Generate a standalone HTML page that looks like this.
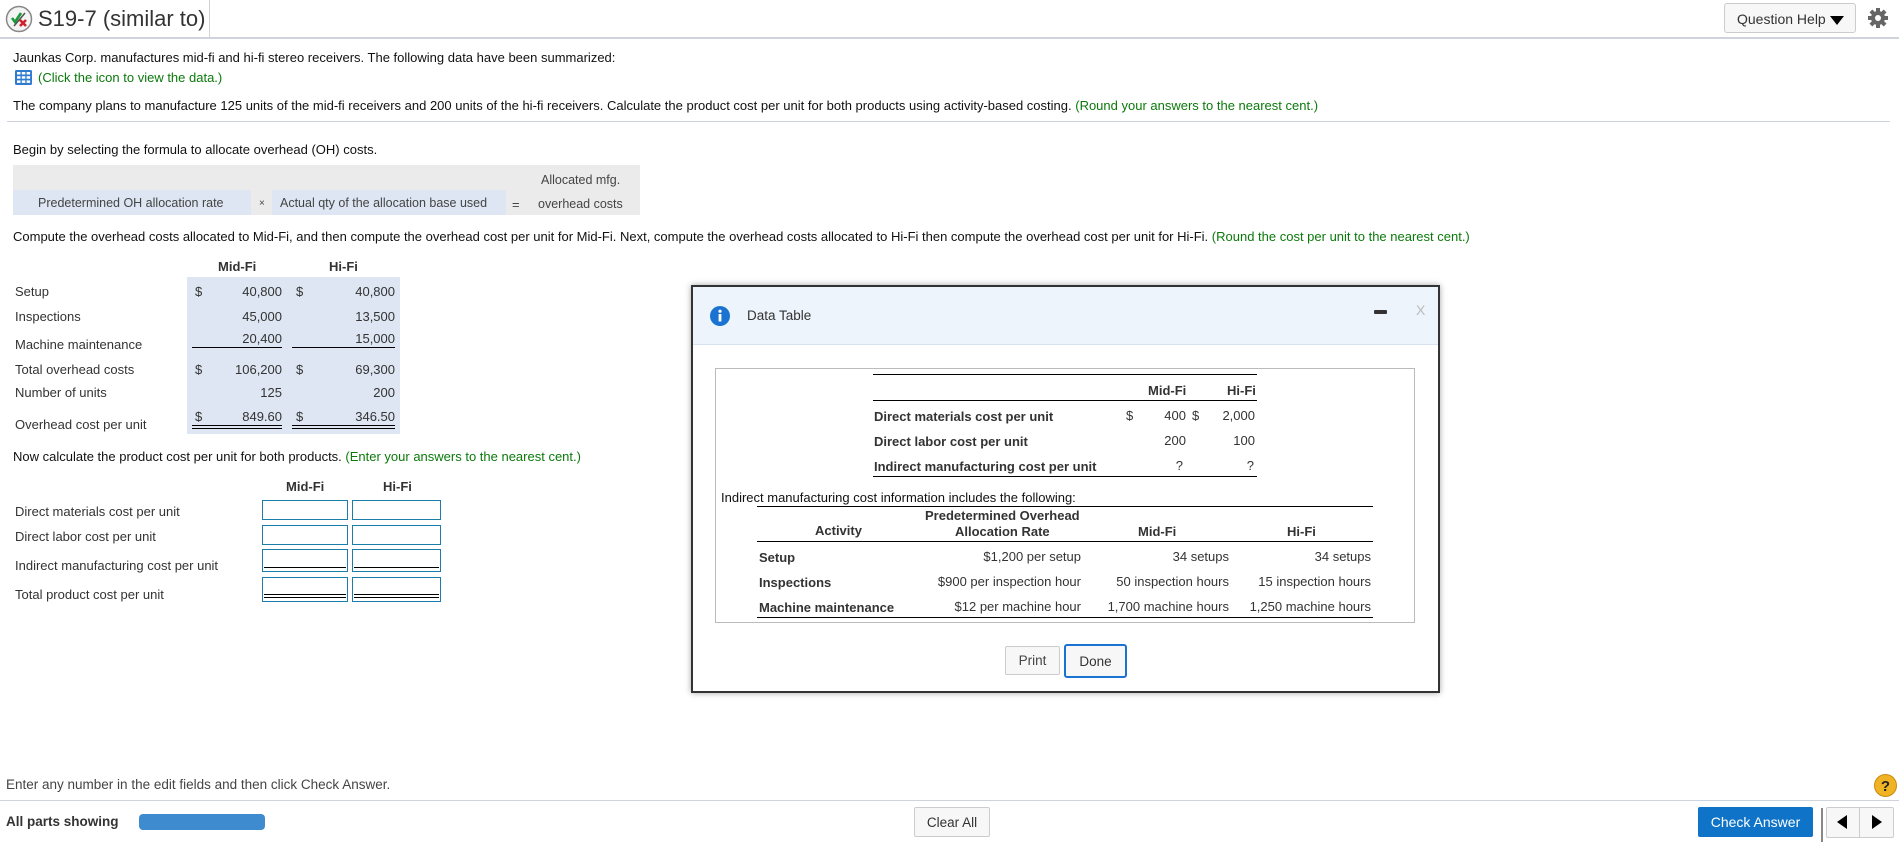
<!DOCTYPE html>
<html><head><meta charset="utf-8"><style>
*{margin:0;padding:0;box-sizing:border-box}
body{width:1899px;height:842px;position:relative;overflow:hidden;background:#fff;font-family:"Liberation Sans",Arial,sans-serif;font-size:13px;color:#111}
.a{position:absolute;white-space:nowrap;line-height:1}
.g{color:#0b7a0b}
.hl{position:absolute;background:#cfd3dc;height:2px}
.r{text-align:right}
.b{font-weight:bold}
.blk{position:absolute;background:#000;height:1px}
.inp{position:absolute;border:1px solid #1b7ea8;background:#fff}
</style></head><body>

<svg class="a" style="left:5px;top:5px" width="28" height="28" viewBox="0 0 28 28"><circle cx="14" cy="14" r="12.5" fill="#f4f4f4" stroke="#888" stroke-width="1.5"/><path d="M7 13 l3 4 l6-9" stroke="#1a9a3a" stroke-width="2.6" fill="none"/><path d="M9 21 L20 8" stroke="#555" stroke-width="1.6"/><path d="M15 15 l6 6 M21 15 l-6 6" stroke="#d0202a" stroke-width="2.6"/></svg>
<div class="a" style="left:38px;top:8px;font-size:22px;color:#333">S19-7 (similar to)</div>
<div style="position:absolute;left:209px;top:0;width:1px;height:37px;background:#cfd3dc"></div>
<div class="hl" style="left:0;top:37px;width:1899px"></div>
<div class="a" style="left:1724px;top:3px;width:132px;height:30px;border:1px solid #ccc;border-radius:3px;background:#f7f7f7;font-size:14px;color:#333;padding:8px 0 0 12px">Question Help <span style="display:inline-block;width:0;height:0;border-left:7px solid transparent;border-right:7px solid transparent;border-top:9px solid #000;vertical-align:-1px"></span></div>
<svg class="a" style="left:1867px;top:7px" width="22" height="22" viewBox="0 0 22 22"><g fill="#666"><circle cx="11" cy="11" r="7"/><g stroke="#666" stroke-width="4"><path d="M11 1v20M1 11h20M3.9 3.9l14.2 14.2M18.1 3.9L3.9 18.1"/></g></g><circle cx="11" cy="11" r="3" fill="#fff"/></svg>

<div class="a" style="left:13px;top:51px">Jaunkas Corp. manufactures mid-fi and hi-fi stereo receivers. The following data have been summarized:</div>
<svg class="a" style="left:15px;top:70px" width="17" height="15" viewBox="0 0 17 15"><rect width="17" height="15" rx="1.5" fill="#2e7bd0"/><g fill="#fff"><rect x="2" y="2" width="3.5" height="2.5"/><rect x="6.8" y="2" width="3.5" height="2.5"/><rect x="11.6" y="2" width="3.5" height="2.5"/><rect x="2" y="6.2" width="3.5" height="2.5"/><rect x="6.8" y="6.2" width="3.5" height="2.5"/><rect x="11.6" y="6.2" width="3.5" height="2.5"/><rect x="2" y="10.4" width="3.5" height="2.5"/><rect x="6.8" y="10.4" width="3.5" height="2.5"/><rect x="11.6" y="10.4" width="3.5" height="2.5"/></g></svg>
<div class="a g" style="left:38px;top:71px">(Click the icon to view the data.)</div>
<div class="a" style="left:13px;top:99px">The company plans to manufacture 125 units of the mid-fi receivers and 200 units of the hi-fi receivers. Calculate the product cost per unit for both products using activity-based costing. <span class="g">(Round your answers to the nearest cent.)</span></div>
<div class="hl" style="left:7px;top:121px;width:1883px;height:1px"></div>

<div class="a" style="left:13px;top:143px">Begin by selecting the formula to allocate overhead (OH) costs.</div>
<div style="position:absolute;left:13px;top:165px;width:627px;height:50px;background:#ebebeb"></div>
<div style="position:absolute;left:13px;top:190px;width:238px;height:25px;background:#dde6f2"></div>
<div style="position:absolute;left:272px;top:190px;width:234px;height:25px;background:#dde6f2"></div>
<div class="a" style="left:38px;top:197px;font-size:12.5px;color:#444">Predetermined OH allocation rate</div>
<div class="a" style="left:259px;top:199px;font-size:10px;color:#444">×</div>
<div class="a" style="left:280px;top:197px;font-size:12.5px;color:#444">Actual qty of the allocation base used</div>
<div class="a" style="left:512px;top:198px;color:#444">=</div>
<div class="a" style="left:541px;top:174px;font-size:12.5px;color:#444">Allocated mfg.</div>
<div class="a" style="left:538px;top:198px;font-size:12.5px;color:#444">overhead costs</div>

<div class="a" style="left:13px;top:230px">Compute the overhead costs allocated to Mid-Fi, and then compute the overhead cost per unit for Mid-Fi. Next, compute the overhead costs allocated to Hi-Fi then compute the overhead cost per unit for Hi-Fi. <span class="g">(Round the cost per unit to the nearest cent.)</span></div>

<div class="a b" style="left:218px;top:260px;color:#333">Mid-Fi</div>
<div class="a b" style="left:329px;top:260px;color:#333">Hi-Fi</div>
<div style="position:absolute;left:187px;top:277px;width:213px;height:157px;background:#dde6f2"></div>
<div class="a" style="left:15px;top:285px;color:#333">Setup</div>
<div class="a" style="left:15px;top:310px;color:#333">Inspections</div>
<div class="a" style="left:15px;top:338px;color:#333">Machine maintenance</div>
<div class="a" style="left:15px;top:363px;color:#333">Total overhead costs</div>
<div class="a" style="left:15px;top:386px;color:#333">Number of units</div>
<div class="a" style="left:15px;top:418px;color:#333">Overhead cost per unit</div>
<div class="a" style="left:195px;top:285px;color:#333">$</div><div class="a" style="left:296px;top:285px;color:#333">$</div>
<div class="a" style="left:195px;top:363px;color:#333">$</div><div class="a" style="left:296px;top:363px;color:#333">$</div>
<div class="a" style="left:195px;top:410px;color:#333">$</div><div class="a" style="left:296px;top:410px;color:#333">$</div>
<div class="a r" style="left:200px;width:82px;top:285px;color:#333">40,800</div><div class="a r" style="left:313px;width:82px;top:285px;color:#333">40,800</div>
<div class="a r" style="left:200px;width:82px;top:310px;color:#333">45,000</div><div class="a r" style="left:313px;width:82px;top:310px;color:#333">13,500</div>
<div class="a r" style="left:200px;width:82px;top:332px;color:#333">20,400</div><div class="a r" style="left:313px;width:82px;top:332px;color:#333">15,000</div>
<div class="a r" style="left:200px;width:82px;top:363px;color:#333">106,200</div><div class="a r" style="left:313px;width:82px;top:363px;color:#333">69,300</div>
<div class="a r" style="left:200px;width:82px;top:386px;color:#333">125</div><div class="a r" style="left:313px;width:82px;top:386px;color:#333">200</div>
<div class="a r" style="left:200px;width:82px;top:410px;color:#333">849.60</div><div class="a r" style="left:313px;width:82px;top:410px;color:#333">346.50</div>
<div class="blk" style="left:192px;top:347px;width:90px"></div><div class="blk" style="left:292px;top:347px;width:103px"></div>
<div class="blk" style="left:192px;top:425px;width:90px"></div><div class="blk" style="left:292px;top:425px;width:103px"></div>
<div class="blk" style="left:192px;top:428px;width:90px"></div><div class="blk" style="left:292px;top:428px;width:103px"></div>

<div class="a" style="left:13px;top:450px">Now calculate the product cost per unit for both products. <span class="g">(Enter your answers to the nearest cent.)</span></div>

<div class="a b" style="left:286px;top:480px;color:#333">Mid-Fi</div>
<div class="a b" style="left:383px;top:480px;color:#333">Hi-Fi</div>
<div class="a" style="left:15px;top:505px;color:#333">Direct materials cost per unit</div>
<div class="a" style="left:15px;top:530px;color:#333">Direct labor cost per unit</div>
<div class="a" style="left:15px;top:559px;color:#333">Indirect manufacturing cost per unit</div>
<div class="a" style="left:15px;top:588px;color:#333">Total product cost per unit</div>
<div class="inp" style="left:262px;top:500px;width:86px;height:20px"></div><div class="inp" style="left:352px;top:500px;width:89px;height:20px"></div>
<div class="inp" style="left:262px;top:525px;width:86px;height:20px"></div><div class="inp" style="left:352px;top:525px;width:89px;height:20px"></div>
<div class="inp" style="left:262px;top:549px;width:86px;height:23px"></div><div class="inp" style="left:352px;top:549px;width:89px;height:23px"></div>
<div class="inp" style="left:262px;top:577px;width:86px;height:25px"></div><div class="inp" style="left:352px;top:577px;width:89px;height:25px"></div>
<div class="blk" style="left:264px;top:567px;width:82px"></div><div class="blk" style="left:354px;top:567px;width:85px"></div>
<div class="blk" style="left:264px;top:594px;width:82px"></div><div class="blk" style="left:354px;top:594px;width:85px"></div>
<div class="blk" style="left:264px;top:597px;width:82px"></div><div class="blk" style="left:354px;top:597px;width:85px"></div>

<div style="position:absolute;left:691px;top:285px;width:749px;height:408px;border:2px solid #333;background:#fff;box-shadow:0 0 6px rgba(0,0,0,.35)"></div>
<div style="position:absolute;left:693px;top:287px;width:745px;height:58px;background:#eef4fb;border-bottom:1px solid #d6e2ef"></div>
<svg class="a" style="left:710px;top:306px" width="20" height="20" viewBox="0 0 20 20"><circle cx="10" cy="10" r="10" fill="#1a73d0"/><rect x="8.6" y="8" width="2.8" height="7.5" fill="#fff"/><circle cx="10" cy="5.2" r="1.6" fill="#fff"/></svg>
<div class="a" style="left:747px;top:309px;font-size:13.5px;color:#333">Data Table</div>
<div style="position:absolute;left:1374px;top:310px;width:13px;height:4px;background:#333;border-radius:1px"></div>
<div class="a" style="left:1416px;top:303px;font-size:14px;color:#bbb">X</div>
<div style="position:absolute;left:715px;top:368px;width:700px;height:255px;border:1px solid #bbb"></div>

<div class="blk" style="left:873px;top:374px;width:384px"></div>
<div class="blk" style="left:873px;top:400px;width:384px"></div>
<div class="blk" style="left:873px;top:476px;width:384px"></div>
<div class="a b" style="left:1148px;top:384px;color:#333">Mid-Fi</div>
<div class="a b" style="left:1227px;top:384px;color:#333">Hi-Fi</div>
<div class="a b" style="left:874px;top:410px;color:#333">Direct materials cost per unit</div>
<div class="a b" style="left:874px;top:435px;color:#333">Direct labor cost per unit</div>
<div class="a b" style="left:874px;top:460px;color:#333">Indirect manufacturing cost per unit</div>
<div class="a" style="left:1126px;top:409px;color:#333">$</div>
<div class="a r" style="left:1140px;width:46px;top:409px;color:#333">400</div>
<div class="a" style="left:1192px;top:409px;color:#333">$</div>
<div class="a r" style="left:1205px;width:50px;top:409px;color:#333">2,000</div>
<div class="a r" style="left:1140px;width:46px;top:434px;color:#333">200</div>
<div class="a r" style="left:1205px;width:50px;top:434px;color:#333">100</div>
<div class="a r" style="left:1140px;width:43px;top:459px;color:#333">?</div>
<div class="a r" style="left:1205px;width:49px;top:459px;color:#333">?</div>

<div class="a" style="left:721px;top:491px;color:#111">Indirect manufacturing cost information includes the following:</div>
<div class="blk" style="left:757px;top:506px;width:616px"></div>
<div class="blk" style="left:757px;top:541px;width:616px"></div>
<div class="blk" style="left:757px;top:617px;width:616px"></div>
<div class="a b" style="left:925px;top:509px;color:#333">Predetermined Overhead</div>
<div class="a b" style="left:955px;top:525px;color:#333">Allocation Rate</div>
<div class="a b" style="left:815px;top:524px;color:#333">Activity</div>
<div class="a b" style="left:1138px;top:525px;color:#333">Mid-Fi</div>
<div class="a b" style="left:1287px;top:525px;color:#333">Hi-Fi</div>
<div class="a b" style="left:759px;top:551px;color:#333">Setup</div>
<div class="a b" style="left:759px;top:576px;color:#333">Inspections</div>
<div class="a b" style="left:759px;top:601px;color:#333">Machine maintenance</div>
<div class="a r" style="left:900px;width:181px;top:550px;color:#333">$1,200 per setup</div>
<div class="a r" style="left:900px;width:181px;top:575px;color:#333">$900 per inspection hour</div>
<div class="a r" style="left:900px;width:181px;top:600px;color:#333">$12 per machine hour</div>
<div class="a r" style="left:1090px;width:139px;top:550px;color:#333">34 setups</div>
<div class="a r" style="left:1090px;width:139px;top:575px;color:#333">50 inspection hours</div>
<div class="a r" style="left:1090px;width:139px;top:600px;color:#333">1,700 machine hours</div>
<div class="a r" style="left:1232px;width:139px;top:550px;color:#333">34 setups</div>
<div class="a r" style="left:1232px;width:139px;top:575px;color:#333">15 inspection hours</div>
<div class="a r" style="left:1232px;width:139px;top:600px;color:#333">1,250 machine hours</div>

<div class="a" style="left:1005px;top:646px;width:55px;height:29px;border:1px solid #ccc;border-radius:2px;background:#f7f7f7;font-size:13.5px;color:#444;text-align:center;padding-top:7px">Print</div>
<div class="a" style="left:1064px;top:644px;width:63px;height:34px;border:2px solid #1a73d0;border-radius:3px;background:#f7f7f7;font-size:13.5px;color:#333;text-align:center;padding-top:9px">Done</div>

<div class="a" style="left:6px;top:778px;font-size:13.5px;color:#444">Enter any number in the edit fields and then click Check Answer.</div>
<svg class="a" style="left:1874px;top:774px" width="23" height="23" viewBox="0 0 23 23"><circle cx="11.5" cy="11.5" r="11" fill="#f0b323" stroke="#c98a10"/><text x="11.5" y="17" font-family="Liberation Sans" font-weight="bold" font-size="15" text-anchor="middle" fill="#222">?</text></svg>
<div class="hl" style="left:0;top:800px;width:1899px;height:1px"></div>
<div class="a b" style="left:6px;top:815px;font-size:13.5px;color:#333">All parts showing</div>
<div style="position:absolute;left:139px;top:814px;width:126px;height:16px;background:#3f8bd0;border-radius:4px"></div>
<div class="a" style="left:914px;top:807px;width:76px;height:30px;border:1px solid #ccc;border-radius:2px;background:#f7f7f7;font-size:13.5px;color:#333;text-align:center;padding-top:8px">Clear All</div>
<div class="a" style="left:1698px;top:807px;width:115px;height:30px;background:#0f74c8;border-radius:2px;font-size:14px;color:#fff;text-align:center;padding-top:8px">Check Answer</div>
<div style="position:absolute;left:1821px;top:808px;width:2px;height:34px;background:#888"></div>
<div style="position:absolute;left:1826px;top:807px;width:68px;height:31px;border:1px solid #ccc;border-radius:2px;background:#f7f7f7"></div>
<div style="position:absolute;left:1859px;top:808px;width:1px;height:29px;background:#ccc"></div>
<div style="position:absolute;left:1837px;top:815px;width:0;height:0;border-top:7px solid transparent;border-bottom:7px solid transparent;border-right:10px solid #000"></div>
<div style="position:absolute;left:1872px;top:815px;width:0;height:0;border-top:7px solid transparent;border-bottom:7px solid transparent;border-left:10px solid #000"></div>
</body></html>
